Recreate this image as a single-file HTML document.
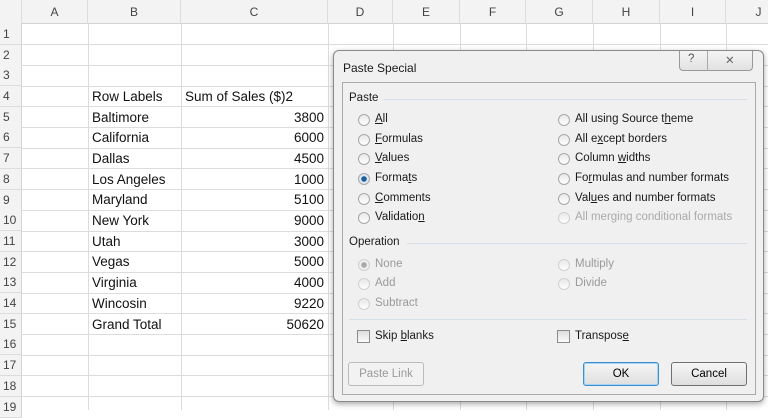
<!DOCTYPE html>
<html><head><style>
*{margin:0;padding:0;box-sizing:border-box}
body{width:768px;height:410px;overflow:hidden;background:#fff;font-family:"Liberation Sans",sans-serif;position:relative}
.hdr{position:absolute;top:0;left:0;width:768px;height:24px;background:#f3f3f3;border-bottom:1px solid #d4d4d4}
.ch{position:absolute;top:0;height:24px;line-height:24px;text-align:center;font-size:12px;color:#444;border-right:1px solid #dcdcdc}
.rh{position:absolute;left:0;width:22px;height:21px;line-height:20px;background:#f3f3f3;border-right:1px solid #d4d4d4;border-bottom:1px solid #dcdcdc;font-size:12px;color:#444;padding-left:3px}
.vl{position:absolute;top:24px;bottom:0;width:1px;background:#dcdcdc}
.hl{position:absolute;left:22px;right:0;height:1px;background:#dcdcdc}
.t{position:absolute;font-size:13.5px;color:#111}
.dlg{position:absolute;left:333px;top:50px;width:431px;height:352px;background:#f0f0f0;border:1px solid #8a8a8a;border-radius:6px;box-shadow:0 2px 6px rgba(0,0,0,.35)}
.in{position:absolute;left:8px;top:31px;width:414px;height:313px;border:1px solid #aaa;background:#f0f0f0}
.d{position:absolute;font-size:11.5px;color:#1a1a1a;white-space:nowrap}
.g{color:#9a9a9a}
.r{position:absolute;width:12px;height:12px;border-radius:50%;border:1px solid #a8a8a8;background:linear-gradient(#e8e8e8,#fff)}
.r.dis{border-color:#d0d0d0}
.cb{position:absolute;width:13px;height:13px;border:1px solid #8c8c8c;background:linear-gradient(#ddd,#fafafa)}
.btn{position:absolute;height:24px;border:1px solid #707070;border-radius:3px;background:linear-gradient(#f6f6f6,#dedede);font-size:11.5px;text-align:center;line-height:22px}
.sep{position:absolute;height:1px;background:#d5dfe5}
u{text-decoration:underline}
</style></head><body>
<div class="hdr"></div>
<div class="ch" style="left:0;width:22px;background:#f3f3f3"></div>
<div class="ch" style="left:22px;width:66px">A</div>
<div class="ch" style="left:88px;width:93px">B</div>
<div class="ch" style="left:181px;width:147px">C</div>
<div class="ch" style="left:328px;width:65px">D</div>
<div class="ch" style="left:393px;width:67px">E</div>
<div class="ch" style="left:460px;width:66px">F</div>
<div class="ch" style="left:526px;width:67px">G</div>
<div class="ch" style="left:593px;width:67px">H</div>
<div class="ch" style="left:660px;width:66px">I</div>
<div class="ch" style="left:726px;width:66px">J</div>
<div class="vl" style="left:88px"></div><div class="vl" style="left:181px"></div><div class="vl" style="left:328px"></div><div class="vl" style="left:393px"></div><div class="vl" style="left:460px"></div><div class="vl" style="left:526px"></div><div class="vl" style="left:593px"></div><div class="vl" style="left:660px"></div><div class="vl" style="left:726px"></div>
<div class="hl" style="top:44px"></div><div class="hl" style="top:65px"></div><div class="hl" style="top:86px"></div><div class="hl" style="top:106px"></div><div class="hl" style="top:127px"></div><div class="hl" style="top:148px"></div><div class="hl" style="top:168px"></div><div class="hl" style="top:189px"></div><div class="hl" style="top:210px"></div><div class="hl" style="top:231px"></div><div class="hl" style="top:251px"></div><div class="hl" style="top:272px"></div><div class="hl" style="top:293px"></div><div class="hl" style="top:313px"></div><div class="hl" style="top:334px"></div><div class="hl" style="top:355px"></div><div class="hl" style="top:375px"></div><div class="hl" style="top:396px"></div>
<div class="rh" style="top:24px">1</div><div class="rh" style="top:45px">2</div><div class="rh" style="top:65px">3</div><div class="rh" style="top:86px">4</div><div class="rh" style="top:107px">5</div><div class="rh" style="top:127px">6</div><div class="rh" style="top:148px">7</div><div class="rh" style="top:169px">8</div><div class="rh" style="top:190px">9</div><div class="rh" style="top:210px">10</div><div class="rh" style="top:231px">11</div><div class="rh" style="top:252px">12</div><div class="rh" style="top:272px">13</div><div class="rh" style="top:293px">14</div><div class="rh" style="top:314px">15</div><div class="rh" style="top:334px">16</div><div class="rh" style="top:355px">17</div><div class="rh" style="top:376px">18</div><div class="rh" style="top:397px">19</div>
<div class="t" style="left:92px;top:89px">Row Labels</div><div class="t" style="left:185px;top:89px">Sum of Sales ($)2</div>
<div class="t" style="left:92px;top:110px">Baltimore</div><div class="t" style="right:444px;top:110px">3800</div>
<div class="t" style="left:92px;top:130px">California</div><div class="t" style="right:444px;top:130px">6000</div>
<div class="t" style="left:92px;top:151px">Dallas</div><div class="t" style="right:444px;top:151px">4500</div>
<div class="t" style="left:92px;top:172px">Los Angeles</div><div class="t" style="right:444px;top:172px">1000</div>
<div class="t" style="left:92px;top:192px">Maryland</div><div class="t" style="right:444px;top:192px">5100</div>
<div class="t" style="left:92px;top:213px">New York</div><div class="t" style="right:444px;top:213px">9000</div>
<div class="t" style="left:92px;top:234px">Utah</div><div class="t" style="right:444px;top:234px">3000</div>
<div class="t" style="left:92px;top:254px">Vegas</div><div class="t" style="right:444px;top:254px">5000</div>
<div class="t" style="left:92px;top:275px">Virginia</div><div class="t" style="right:444px;top:275px">4000</div>
<div class="t" style="left:92px;top:296px">Wincosin</div><div class="t" style="right:444px;top:296px">9220</div>
<div class="t" style="left:92px;top:317px">Grand Total</div><div class="t" style="right:444px;top:317px">50620</div>

<div class="dlg">
<div class="d" style="left:9px;top:10px;font-size:12px">Paste Special</div>
<div style="position:absolute;left:345px;top:0;width:74px;height:20px;border:1px solid #999;border-top:none;border-radius:0 0 4px 4px;background:linear-gradient(#f4f4f4,#e2e2e2)"></div>
<div style="position:absolute;left:373px;top:0;width:1px;height:20px;background:#aaa"></div>
<div class="d" style="left:354px;top:2px;color:#555">?</div>
<div class="d" style="left:391px;top:2px;color:#666">✕</div>
<div class="in">
<div class="d" style="left:6px;top:9px">Paste</div><div class="sep" style="left:40px;right:8px;top:16px"></div>
<div class="r" style="left:15px;top:31px"></div><div class="d" style="left:32px;top:30px"><u>A</u>ll</div>
<div class="r" style="left:15px;top:51px"></div><div class="d" style="left:32px;top:50px"><u>F</u>ormulas</div>
<div class="r" style="left:15px;top:70px"></div><div class="d" style="left:32px;top:69px"><u>V</u>alues</div>
<div class="r" style="left:15px;top:90px;background:radial-gradient(circle,#1f5f9e 0 2.5px,#dfe8f0 3px)"></div><div class="d" style="left:32px;top:89px">Forma<u>t</u>s</div>
<div class="r" style="left:15px;top:110px"></div><div class="d" style="left:32px;top:109px"><u>C</u>omments</div>
<div class="r" style="left:15px;top:129px"></div><div class="d" style="left:32px;top:128px">Validatio<u>n</u></div>
<div class="r" style="left:215px;top:31px"></div><div class="d" style="left:232px;top:30px">All using Source t<u>h</u>eme</div>
<div class="r" style="left:215px;top:51px"></div><div class="d" style="left:232px;top:50px">All e<u>x</u>cept borders</div>
<div class="r" style="left:215px;top:70px"></div><div class="d" style="left:232px;top:69px">Column <u>w</u>idths</div>
<div class="r" style="left:215px;top:90px"></div><div class="d" style="left:232px;top:89px">Fo<u>r</u>mulas and number formats</div>
<div class="r" style="left:215px;top:110px"></div><div class="d" style="left:232px;top:109px">Val<u>u</u>es and number formats</div>
<div class="r dis" style="left:215px;top:129px"></div><div class="d g" style="left:232px;top:128px;color:#aaa">All merging conditional formats</div>
<div class="d" style="left:6px;top:153px">Operation</div><div class="sep" style="left:64px;right:8px;top:160px"></div>
<div class="r dis" style="left:15px;top:176px;background:radial-gradient(circle,#aaa 0 2.5px,#eee 3px)"></div><div class="d g" style="left:32px;top:175px">None</div>
<div class="r dis" style="left:15px;top:195px"></div><div class="d g" style="left:32px;top:194px">Add</div>
<div class="r dis" style="left:15px;top:215px"></div><div class="d g" style="left:32px;top:214px">Subtract</div>
<div class="r dis" style="left:215px;top:176px"></div><div class="d g" style="left:232px;top:175px">Multiply</div>
<div class="r dis" style="left:215px;top:195px"></div><div class="d g" style="left:232px;top:194px">Divide</div>
<div class="sep" style="left:6px;right:8px;top:236px"></div>
<div class="cb" style="left:14px;top:247px"></div><div class="d" style="left:32px;top:247px">Skip <u>b</u>lanks</div>
<div class="cb" style="left:214px;top:247px"></div><div class="d" style="left:232px;top:247px">Transpos<u>e</u></div>
<div class="btn" style="left:5px;top:279px;width:76px;border-color:#bbb;color:#9a9a9a;background:#f2f2f2">Paste Link</div>
<div class="btn" style="left:240px;top:279px;width:76px;border-color:#3c8fd0;box-shadow:inset 0 0 0 1px #a6d3f5">OK</div>
<div class="btn" style="left:328px;top:279px;width:76px">Cancel</div>
</div>
</div>
</body></html>
